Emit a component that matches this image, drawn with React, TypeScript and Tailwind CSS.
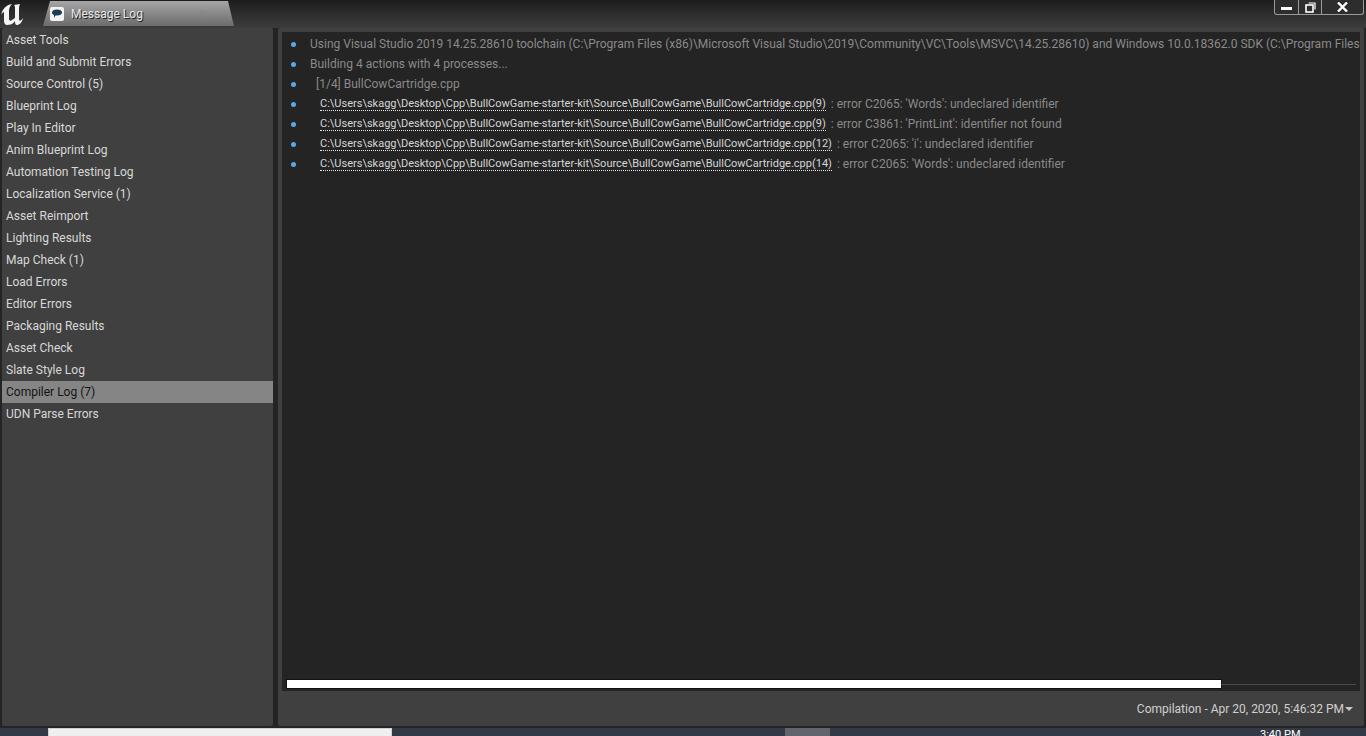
const tabs = [
  'Asset Tools',
  'Build and Submit Errors',
  'Source Control (5)',
  'Blueprint Log',
  'Play In Editor',
  'Anim Blueprint Log',
  'Automation Testing Log',
  'Localization Service (1)',
  'Asset Reimport',
  'Lighting Results',
  'Map Check (1)',
  'Load Errors',
  'Editor Errors',
  'Packaging Results',
  'Asset Check',
  'Slate Style Log',
  'Compiler Log (7)',
  'UDN Parse Errors',
];

const base = 'C:\\Users\\skagg\\Desktop\\Cpp\\BullCowGame-starter-kit\\Source\\BullCowGame\\BullCowCartridge.cpp';

const errors = [
  { line: 9, message: ": error C2065: 'Words': undeclared identifier" },
  { line: 9, message: ": error C3861: 'PrintLint': identifier not found" },
  { line: 12, message: ": error C2065: 'i': undeclared identifier" },
  { line: 14, message: ": error C2065: 'Words': undeclared identifier" },
];

function Bullet() {
  return <span className="w-[5px] h-[5px] rounded-full bg-[#5aa9e6] shrink-0 ml-[9px]" />;
}

function TitleBar() {
  return (
    <div className="h-[28px] flex bg-gradient-to-b from-[#1c1c1c] via-[#2e2e2e] to-[#3c3c3c]">
      <svg className="w-[26px] h-[26px] ml-[0px] mt-[1px] shrink-0" viewBox="0 0 26 26">
        <path
          d="M1 15C2 8 6 4 12 3C10 5 9 7 9 10L9 18C9 20 11 20 12 19L15 17L15 8C15 6 15 5 14 4L20 3C19 5 19 7 19 9L19 19C20 20 21 20 23 17C22 22 19 24 17 24C15 24 15 22 15 20C13 23 10 24 7 24C5 24 4 22 4 20L4 11C2 12 1 13 1 15Z"
          fill="#f4f4f4"
        />
      </svg>
      <div className="relative ml-[10px] mt-[1px] w-[204px] h-[25px] rounded-t-[8px] bg-gradient-to-b from-[#a6a6a6] to-[#6c6c6c] [clip-path:polygon(0_100%,7px_100%,14px_0,192px_0,198px_100%,204px_100%)] flex items-center">
        <svg className="w-[14px] h-[14px] ml-[14px] shrink-0" viewBox="0 0 14 14">
          <rect width="14" height="14" rx="2" fill="#f2f2f2" />
          <path d="M2 5.5C2 3.5 4 2.5 7 2.5C10 2.5 12 3.5 12 5.5C12 7.5 10 8.5 7 8.5L5.5 8.5L4 11L4 8C2.5 7.5 2 6.5 2 5.5Z" fill="#1e3a55" />
        </svg>
        <span className="ml-[7px] text-[12px] text-[#e8e8e8] [text-shadow:1px_1px_0_#222]">Message Log</span>
        <svg className="w-[7px] h-[7px] ml-[57px] shrink-0" viewBox="0 0 7 7">
          <path d="M0.5 0.5L6.5 6.5M6.5 0.5L0.5 6.5" stroke="#858585" strokeWidth="1.2" />
        </svg>
      </div>
      <div className="ml-auto flex h-[15px] mr-[2px]">
        <div className="w-[25px] border border-[#9a9a9a] border-t-0 rounded-bl-[3px] bg-[#2d2d2d] flex items-center justify-center">
          <div className="w-[11px] h-[3px] mt-[3px] bg-white" />
        </div>
        <div className="w-[23px] border-r border-b border-[#9a9a9a] bg-[#2d2d2d] flex items-center justify-center">
          <svg className="w-[11px] h-[11px]" viewBox="0 0 11 11" fill="none">
            <rect x="1" y="3" width="7" height="7" stroke="#fff" strokeWidth="1.6" />
            <path d="M3.5 1H10V7.5" stroke="#fff" strokeWidth="1.2" />
          </svg>
        </div>
        <div className="w-[42px] border-r border-b border-[#9a9a9a] rounded-br-[3px] bg-[#2d2d2d] flex items-center justify-center">
          <svg className="w-[11px] h-[10px]" viewBox="0 0 11 10">
            <path d="M1 0.5L10 9.5M10 0.5L1 9.5" stroke="#fff" strokeWidth="2.4" />
          </svg>
        </div>
      </div>
    </div>
  );
}

function Sidebar() {
  return (
    <div className="w-[271px] shrink-0 bg-[#404040] rounded-[2px] pt-px">
      {tabs.map((tab) => (
        <div
          key={tab}
          className={
            tab === 'Compiler Log (7)'
              ? 'h-[22px] px-[4px] flex items-center text-[12px] bg-[#858585] text-[#141414]'
              : 'h-[22px] px-[4px] flex items-center text-[12px] text-[#d8d8d8]'
          }
        >
          {tab}
        </div>
      ))}
    </div>
  );
}

function LogPanel() {
  return (
    <div className="flex-1 min-w-0 bg-[#404040] rounded-[2px] flex flex-col">
      <div className="h-[659px] mx-[4px] mt-[4px] bg-[#242424] flex flex-col overflow-hidden">
        <div className="flex-1 pt-[2px]">
          <div className="h-[20px] flex items-center text-[12px] text-[#8a8a8a] whitespace-nowrap overflow-hidden">
            <Bullet />
            <span className="ml-[14px]">
              Using Visual Studio 2019 14.25.28610 toolchain (C:\Program Files (x86)\Microsoft Visual Studio\2019\Community\VC\Tools\MSVC\14.25.28610) and Windows 10.0.18362.0 SDK (C:\Program Files (x86)\Windows Kits\10).
            </span>
          </div>
          <div className="h-[20px] flex items-center text-[12px] text-[#8a8a8a]">
            <Bullet />
            <span className="ml-[14px]">Building 4 actions with 4 processes...</span>
          </div>
          <div className="h-[20px] flex items-center text-[12px] text-[#8a8a8a]">
            <Bullet />
            <span className="ml-[20px]">[1/4] BullCowCartridge.cpp</span>
          </div>
          {errors.map((err, i) => (
            <div key={i} className="h-[20px] flex items-center whitespace-nowrap">
              <Bullet />
              <span className="ml-[24px] text-[11px] text-[#d6d6d6] leading-[13px] border-b border-dotted border-[#e8e8e8]">
                {base}({err.line})
              </span>
              <span className="ml-[5px] text-[12px] text-[#8a8a8a]">{err.message}</span>
            </div>
          ))}
        </div>
        <div className="h-[8px] mb-[3px] ml-[5px] mr-[4px] flex items-center">
          <div className="w-[934px] h-[8px] bg-white shadow-[0_0_0_1px_#111]" />
          <div className="flex-1 h-px bg-[#4a4a4a]" />
        </div>
      </div>
      <div className="flex-1 flex items-center justify-end pr-[11px] text-[12px] text-[#d0d0d0]">
        <span>Compilation - Apr 20, 2020, 5:46:32 PM</span>
        <svg className="w-[8px] h-[4px] ml-px" viewBox="0 0 8 4">
          <path d="M0 0H8L4 4Z" fill="#c8c8c8" />
        </svg>
      </div>
    </div>
  );
}

function Taskbar() {
  return (
    <div className="h-[8px] mt-[2px] flex bg-[#333a46] overflow-hidden">
      <div className="ml-[48px] w-[344px] h-[8px] bg-[#efefef] border-x border-t border-[#cfcfcf]" />
      <div className="ml-[393px] w-[45px] h-[8px] bg-[#62666c]" />
      <div className="ml-[430px] text-[11px] leading-[14px] text-white whitespace-nowrap">3:40 PM</div>
    </div>
  );
}

export default function App() {
  return (
    <div className="w-[1366px] h-[736px] overflow-hidden bg-[#242424] font-['Roboto',sans-serif] flex flex-col">
      <TitleBar />
      <div className="h-[698px] flex gap-[5px] pl-[2px] pr-[2px]">
        <Sidebar />
        <LogPanel />
      </div>
      <Taskbar />
    </div>
  );
}
